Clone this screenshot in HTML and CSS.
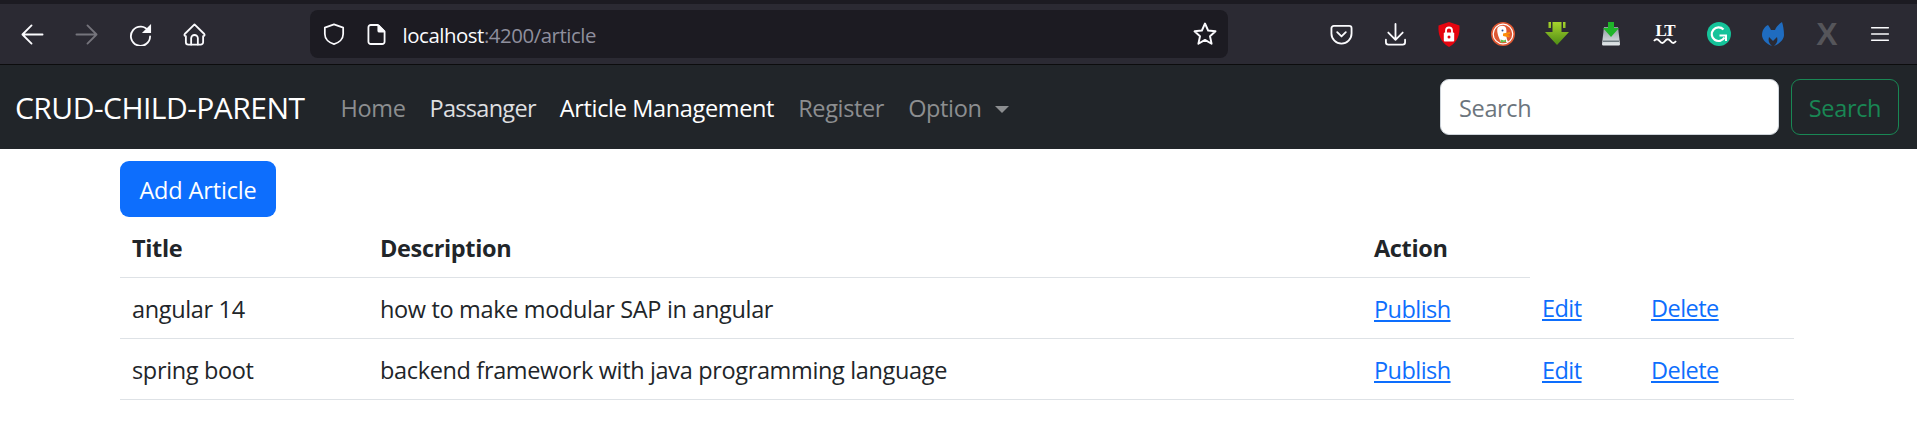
FILE: index.html
```html
<!DOCTYPE html>
<html lang="en">
<head>
<meta charset="utf-8">
<title>CRUD-CHILD-PARENT</title>
<link rel="stylesheet" href="styles.css">
</head>
<body>
<header class="browser">
  <div class="nav-icons">
    <span class="slot"><svg viewBox="0 0 24 24" class="ico"><path d="M1.500 12h21M11 2.500 1.500 12l9.500 9.500"/></svg></span>
    <span class="slot dim"><svg viewBox="0 0 24 24" class="ico"><path d="M1.500 12h21M13 2.500l9.500 9.500-9.500 9.500"/></svg></span>
    <span class="slot"><svg viewBox="0 0 24 24" class="ico"><path d="M20.500 8.500A10 10 0 1 0 22 14"/><path class="fill" d="M23 1v9.500h-9.500z"/></svg></span>
    <span class="slot"><svg viewBox="0 0 24 24" class="ico"><path d="M12 1.500 1.800 11.500c-.8 1 0 2.200 1.200 2.200V20a2.500 2.500 0 0 0 2.500 2.500h13a2.500 2.500 0 0 0 2.500-2.500v-6.300c1.200 0 2-1.200 1.200-2.200z"/><path d="M8.500 22.500V16a3.500 3.500 0 0 1 7 0v6.500"/></svg></span>
  </div>
  <div class="urlbar">
    <svg viewBox="0 0 24 24" class="ico shield"><path d="M12 1.500 2 5v7c0 5.500 4.500 9.500 10 11 5.500-1.500 10-5.500 10-11V5z"/></svg>
    <svg viewBox="0 0 20 22" class="ico page"><path d="M4 1h7.500L18.500 8v10.500a2.500 2.500 0 0 1-2.500 2.500H4a2.500 2.500 0 0 1-2.500-2.500v-15A2.500 2.500 0 0 1 4 1z"/><path class="fill" d="M11 1h2l6 6v2h-6a2 2 0 0 1-2-2z"/></svg>
    <span class="url"><span class="host">localhost</span>:4200/article</span>
    <svg viewBox="0 0 24 24" class="ico star"><path d="M12 1.500l3.100 7 7.400.8-5.500 5 1.600 7.400-6.600-3.800-6.600 3.800L7 14.300l-5.500-5 7.400-.8z"/></svg>
  </div>
  <div class="ext-icons">
    <span class="slot"><svg viewBox="0 0 24 24" class="ico"><path d="M4 3h16a2.500 2.500 0 0 1 2.500 2.500V11a10.500 10.500 0 0 1-21 0V5.500A2.500 2.500 0 0 1 4 3z"/><path d="M7.500 9.500 12 14l4.500-4.500"/></svg></span>
    <span class="slot"><svg viewBox="0 0 24 24" class="ico"><path d="M12 1v16M4.500 10l7.500 7.500 7.500-7.500M2 17.500V20a2.500 2.500 0 0 0 2.500 2.500h15A2.500 2.500 0 0 0 22 20v-2.500"/></svg></span>
    <span class="slot"><svg viewBox="0 0 24 24" class="logo"><path fill="#e5040f" d="M12 0 22.500 3.500C23 12 21 20 12 25 3 20 1 12 1.500 3.500z"/><rect x="6.800" y="10.500" width="10.400" height="9" rx="1" fill="#fff"/><path d="M9 11V8.500a3 3 0 0 1 6 0V11" fill="none" stroke="#fff" stroke-width="1.800"/><circle cx="12" cy="15" r="1.500" fill="#e5040f"/></svg></span>
    <span class="slot"><svg viewBox="0 0 24 24" class="logo"><circle cx="12" cy="12" r="12" fill="#de5833"/><circle cx="12" cy="12" r="9.800" fill="none" stroke="#fff" stroke-width="1.200"/><path fill="#fff" d="M6.500 6C8.500 3 14 3 15 6c1 3 0 6 .5 9 .3 2 1 3.500 1.500 5H10C7.500 15 5.500 10 6.500 6z"/><circle cx="11.500" cy="8.500" r="1" fill="#2d4f8e"/><path fill="#fd8f0a" d="M12 11.500l7-1.500v2l-3.500 1 3 .5v2l-6.500-1.500z"/><path fill="#65bc46" d="M9.500 17.500 13 18.500l2-1v3l-2-.8-3 1.300z"/></svg></span>
    <span class="slot"><svg viewBox="0 0 24 24" class="logo"><defs><linearGradient id="gr" x1="0" y1="0" x2="0" y2="1"><stop offset="0" stop-color="#a6d32c"/><stop offset="1" stop-color="#4e8c15"/></linearGradient></defs><path fill="url(#gr)" d="M3.500 0h2.500v6h-2.500zM18 0h2.500v6H18zM7.500 0h9v10H24L12 23 0 10h7.500z"/></svg></span>
    <span class="slot"><svg viewBox="0 0 24 24" class="logo"><defs><linearGradient id="tr" x1="0" y1="0" x2="0" y2="1"><stop offset="0" stop-color="#8f9ba1"/><stop offset="1" stop-color="#e3e8ea"/></linearGradient></defs><path fill="url(#tr)" d="M5 5h14l2 17c0 1-.5 1.500-2 1.500H5c-1.500 0-2-.5-2-1.500z"/><rect x="4" y="18.500" width="16" height="1.500" fill="#6f7b80"/><path fill="#1fb52a" d="M9 0h6v6h5l-8 9-8-9h5z"/></svg></span>
    <span class="slot"><svg viewBox="0 0 24 24" class="logo"><text x="12" y="14" class="lt-text">LT</text><path d="M1 19c2-2.500 3.500-2.500 5.500 0s3.500 2.500 5.500 0 3.500-2.500 5.500 0 3.500 2.500 5.500 0" fill="none" stroke="#fff" stroke-width="2"/></svg></span>
    <span class="slot"><svg viewBox="0 0 24 24" class="logo"><circle cx="12" cy="12" r="12" fill="#15c39a"/><path d="M16.500 7.500A6.800 6.800 0 1 0 17.500 15.500" fill="none" stroke="#fff" stroke-width="2.200"/><path d="M12.500 13.500h6.500v5.500" fill="none" stroke="#fff" stroke-width="2"/></svg></span>
    <span class="slot"><svg viewBox="0 0 24 24" class="logo"><path fill="#1f6cc0" d="M7 3C3 5 1 9 1 13c0 5 5 9 10 11-3-3-4-5-3-9l4 4 4-4c1 4 0 6-3 9 5-2 10-6 10-11 0-5-1-10-2-13-3 2-6 5-7 8h-4C9 6 8 4 7 3z"/></svg></span>
    <span class="slot"><svg viewBox="0 0 24 24" class="logo"><text x="12" y="23" class="x-text">X</text></svg></span>
    <span class="slot"><svg viewBox="0 0 24 24" class="ico menu"><path d="M2 4.500h20M2 12h20M2 19.500h20"/></svg></span>
  </div>
</header>

<nav class="navbar">
  <a class="brand">CRUD-CHILD-PARENT</a>
  <ul class="nav-list">
    <li class="nav-item muted">Home</li>
    <li class="nav-item soft">Passanger</li>
    <li class="nav-item active">Article Management</li>
    <li class="nav-item muted">Register</li>
    <li class="nav-item muted">Option<span class="caret"></span></li>
  </ul>
  <form class="search">
    <input class="search-input" type="text" placeholder="Search">
    <button class="search-btn" type="button">Search</button>
  </form>
</nav>

<main class="content">
  <button class="add-btn" type="button">Add Article</button>
  <table class="articles">
    <colgroup>
      <col class="c1"><col class="c2"><col class="c3"><col class="c4"><col class="c5">
    </colgroup>
    <thead>
      <tr><th>Title</th><th>Description</th><th>Action</th></tr>
    </thead>
    <tbody>
      <tr><td>angular 14</td><td>how to make modular SAP in angular</td><td><a href="#">Publish</a></td><td><a href="#">Edit</a></td><td><a href="#">Delete</a></td></tr>
      <tr><td>spring boot</td><td>backend framework with java programming language</td><td><a href="#">Publish</a></td><td><a href="#">Edit</a></td><td><a href="#">Delete</a></td></tr>
    </tbody>
  </table>
</main>
</body>
</html>
```
FILE: styles.css
```css
* { box-sizing: border-box; }
html, body { margin: 0; padding: 0; }
body {
  background: #fff;
  color: #212529;
  font-family: "Open Sans", "Noto Sans", sans-serif;
  font-size: 23.5px;
  letter-spacing: -0.35px;
  overflow: hidden;
}

/* browser chrome */
.browser {
  height: 65px;
  padding: 0 0 0 6px;
  display: flex;
  align-items: center;
  background: #2b2a33;
  border-top: 4px solid #1c1b22;
  border-bottom: 1px solid #0c0c0d;
}
.nav-icons, .ext-icons { display: flex; align-items: center; }
.ext-icons { margin-left: 87px; }
.slot {
  width: 53.9px;
  height: 40px;
  display: flex;
  align-items: center;
  justify-content: center;
}
.ico {
  width: 23px;
  height: 23px;
  fill: none;
  stroke: #fbfbfe;
  stroke-width: 1.9;
  stroke-linejoin: round;
  stroke-linecap: round;
}
.ico .fill { fill: #fbfbfe; stroke: none; }
.dim .ico { stroke: #75747c; }
.logo { width: 24px; height: 24px; overflow: visible; }
.lt-text { fill: #fff; font: 700 17px "Liberation Serif", serif; text-anchor: middle; letter-spacing: -1px; }
.x-text { fill: #55555a; font: 700 32px "Liberation Sans", sans-serif; text-anchor: middle; letter-spacing: 0; }
.menu { width: 20px; height: 20px; }

.urlbar {
  width: 918px;
  height: 48px;
  margin-left: 88px;
  padding: 0 11px 0 13px;
  display: flex;
  align-items: center;
  background: #1c1b22;
  border-radius: 8px;
}
.shield { width: 22px; height: 24px; }
.page { width: 19px; height: 21px; margin-left: 22px; }
.url {
  margin-left: 17px;
  padding-top: 1px;
  color: #8f8f9d;
  font-size: 20.4px;
  letter-spacing: -0.45px;
}
.host { color: #fbfbfe; }
.star { width: 24px; height: 24px; margin-left: auto; }

/* app navbar */
.navbar {
  height: 84px;
  padding: 0 18px 0 15px;
  display: flex;
  align-items: center;
  background: #212529;
}
.brand { color: #fff; font-size: 30px; letter-spacing: -0.53px; }
.nav-list {
  list-style: none;
  margin: 0 0 0 36px;
  padding: 2px 0 0;
  display: flex;
  gap: 24px;
}
.nav-item { white-space: nowrap; }
.muted { color: #8c8e90; }
.soft { color: #dedfe0; letter-spacing: -0.7px; }
.active { color: #fff; }
.caret {
  display: inline-block;
  margin-left: 13px;
  vertical-align: 4px;
  border-top: 7px solid #8c8e90;
  border-left: 7px solid transparent;
  border-right: 7px solid transparent;
}
.search { margin-left: auto; display: flex; gap: 12px; }
.search-input {
  width: 339px;
  height: 56px;
  padding: 2px 18px 0;
  border: 1px solid #ced4da;
  border-radius: 9px;
  background: #fff;
  font: inherit;
  letter-spacing: inherit;
  color: #212529;
}
.search-input::placeholder { color: #6c757d; opacity: 1; }
.search-btn {
  width: 108px;
  height: 56px;
  padding: 2px 0 0;
  border: 1px solid #198754;
  border-radius: 9px;
  background: transparent;
  color: #198754;
  font: inherit;
  letter-spacing: inherit;
}

/* content */
.content { padding: 12px 123px 0 120px; }
.add-btn {
  display: block;
  width: 156px;
  height: 56px;
  padding: 2px 0 0;
  border: 0;
  border-radius: 9px;
  background: #0d6efd;
  color: #fff;
  font: inherit;
  letter-spacing: -0.15px;
}
.articles {
  width: 100%;
  table-layout: fixed;
  border-collapse: collapse;
}
.c1 { width: 248px; }
.c2 { width: 994px; }
.c3 { width: 168px; }
.c4 { width: 109px; }
.articles th, .articles td {
  padding: 2px 12px 0;
  height: 61px;
  text-align: left;
  border-bottom: 1px solid #dee2e6;
  white-space: nowrap;
}
.articles th { font-weight: 700; height: 60px; }
.articles a { color: #0d6efd; text-decoration: underline; letter-spacing: -0.55px; }
```
